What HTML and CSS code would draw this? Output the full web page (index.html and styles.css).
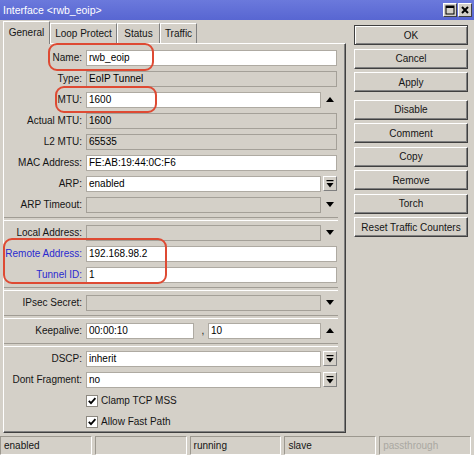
FILE: index.html
```html
<!DOCTYPE html>
<html>
<head>
<meta charset="utf-8">
<link rel="stylesheet" href="styles.css">
</head>
<body>
<div class="window">
  <div class="titlebar">
    <span class="title">Interface &lt;rwb_eoip&gt;</span>
    <div class="wbtns">
      <div class="wbtn"><svg width="10" height="10" viewBox="0 0 10 10"><rect x="1" y="1" width="8" height="8" fill="none" stroke="#000" stroke-width="1"/><rect x="1" y="1" width="8" height="2" fill="#000"/></svg></div>
      <div class="wbtn"><svg width="10" height="10" viewBox="0 0 10 10"><path d="M2 2 L8 8 M8 2 L2 8" stroke="#000" stroke-width="2"/></svg></div>
    </div>
  </div>
  <div class="main">
    <div class="left">
      <div class="tabs">
        <div class="tab active t1">General</div>
        <div class="tab t2">Loop Protect</div>
        <div class="tab t3">Status</div>
        <div class="tab t4">Traffic</div>
      </div>
      <div class="panel">
        <div class="row"><span class="lbl">Name:</span><div class="field">rwb_eoip</div></div>
        <div class="row"><span class="lbl">Type:</span><div class="field ro">EoIP Tunnel</div></div>
        <div class="row"><span class="lbl">MTU:</span><div class="field short">1600</div><span class="slot"><svg class="tri" width="8" height="5" viewBox="0 0 8 5"><polygon points="0,5 8,5 4,0" fill="#000"/></svg></span></div>
        <div class="row"><span class="lbl">Actual MTU:</span><div class="field ro">1600</div></div>
        <div class="row"><span class="lbl">L2 MTU:</span><div class="field ro">65535</div></div>
        <div class="row"><span class="lbl">MAC Address:</span><div class="field">FE:AB:19:44:0C:F6</div></div>
        <div class="row"><span class="lbl">ARP:</span><div class="field short">enabled</div><span class="slot"><span class="dd"><svg width="8" height="8" viewBox="0 0 8 8"><rect x="0.5" y="0" width="7" height="1.2" fill="#000"/><polygon points="0.5,3 7.5,3 4,7.5" fill="#000"/></svg></span></span></div>
        <div class="row"><span class="lbl">ARP Timeout:</span><div class="field short ro"></div><span class="slot"><svg class="tri" width="8" height="5" viewBox="0 0 8 5"><polygon points="0,0 8,0 4,5" fill="#000"/></svg></span></div>
        <div class="sep"></div>
        <div class="row"><span class="lbl">Local Address:</span><div class="field short ro"></div><span class="slot"><svg class="tri" width="8" height="5" viewBox="0 0 8 5"><polygon points="0,0 8,0 4,5" fill="#000"/></svg></span></div>
        <div class="row"><span class="lbl blue">Remote Address:</span><div class="field">192.168.98.2</div></div>
        <div class="row"><span class="lbl blue">Tunnel ID:</span><div class="field">1</div></div>
        <div class="sep"></div>
        <div class="row"><span class="lbl">IPsec Secret:</span><div class="field short ro"></div><span class="slot"><svg class="tri" width="8" height="5" viewBox="0 0 8 5"><polygon points="0,0 8,0 4,5" fill="#000"/></svg></span></div>
        <div class="sep"></div>
        <div class="row"><span class="lbl">Keepalive:</span><div class="field ka1">00:00:10</div><span class="comma">,</span><div class="field ka2">10</div><span class="slot"><svg class="tri" width="8" height="5" viewBox="0 0 8 5"><polygon points="0,5 8,5 4,0" fill="#000"/></svg></span></div>
        <div class="sep sep4"></div>
        <div class="row"><span class="lbl">DSCP:</span><div class="field short">inherit</div><span class="slot"><span class="dd"><svg width="8" height="8" viewBox="0 0 8 8"><rect x="0.5" y="0" width="7" height="1.2" fill="#000"/><polygon points="0.5,3 7.5,3 4,7.5" fill="#000"/></svg></span></span></div>
        <div class="row"><span class="lbl">Dont Fragment:</span><div class="field short">no</div><span class="slot"><span class="dd"><svg width="8" height="8" viewBox="0 0 8 8"><rect x="0.5" y="0" width="7" height="1.2" fill="#000"/><polygon points="0.5,3 7.5,3 4,7.5" fill="#000"/></svg></span></span></div>
        <div class="row"><span class="lbl"></span><span class="cb"><svg width="10" height="10" viewBox="0 0 10 10"><path d="M1.8 4.8 L4 7.2 L8.4 2.2" fill="none" stroke="#000" stroke-width="1.8"/></svg></span><span class="cbl">Clamp TCP MSS</span></div>
        <div class="row"><span class="lbl"></span><span class="cb"><svg width="10" height="10" viewBox="0 0 10 10"><path d="M1.8 4.8 L4 7.2 L8.4 2.2" fill="none" stroke="#000" stroke-width="1.8"/></svg></span><span class="cbl">Allow Fast Path</span></div>
      </div>
    </div>
    <div class="right">
      <div class="btn default">OK</div>
      <div class="btn">Cancel</div>
      <div class="btn">Apply</div>
      <div class="btn gap">Disable</div>
      <div class="btn">Comment</div>
      <div class="btn">Copy</div>
      <div class="btn">Remove</div>
      <div class="btn">Torch</div>
      <div class="btn">Reset Traffic Counters</div>
    </div>
  </div>
  <div class="statusbar">
    <div class="cell">enabled</div>
    <div class="cell"></div>
    <div class="cell">running</div>
    <div class="cell">slave</div>
    <div class="cell dim">passthrough</div>
  </div>
  <div class="mark m-name"></div>
  <div class="mark m-mtu"></div>
  <div class="mark m-remote"></div>
</div>
</body>
</html>
```

FILE: styles.css
```css
* { box-sizing: border-box; }
html, body { margin: 0; padding: 0; }
body {
  width: 474px;
  height: 455px;
  overflow: hidden;
  background: #d4d0c8;
  font-family: "Liberation Sans", Arial, sans-serif;
  font-size: 10px;
  color: #151515;
}
.window {
  position: relative;
  width: 474px;
  height: 455px;
  display: flex;
  flex-direction: column;
}
.titlebar {
  height: 20px;
  flex: none;
  background: linear-gradient(#6b79dc, #5866d2);
  color: #fff;
  display: flex;
  align-items: center;
  padding-left: 3px;
}
.title { flex: 1; font-size: 10.5px; }
.wbtns { display: flex; gap: 1px; margin-right: 2px; }
.wbtn {
  width: 14px;
  height: 14px;
  background: #d4d0c8;
  border: 1px solid;
  border-color: #fff #404040 #404040 #fff;
  display: flex;
  align-items: center;
  justify-content: center;
}
.main { display: flex; flex: none; height: 414px; }
.left { width: 346px; padding-left: 3px; display: flex; flex-direction: column; }
.tabs { height: 23px; display: flex; align-items: flex-end; flex: none; }
.tab {
  height: 20px;
  border: 1px solid;
  border-color: #fff #808080 transparent #fff;
  border-bottom: none;
  display: flex;
  align-items: center;
  justify-content: center;
  background: #d4d0c8;
}
.tab.active {
  height: 23px;
  margin-bottom: -1px;
  position: relative;
  z-index: 1;
  padding-bottom: 2px;
}
.t1 { width: 47px; }
.t2 { width: 67px; }
.t3 { width: 43px; }
.t4 { width: 37px; }
.panel {
  height: 390px;
  border: 1px solid;
  border-color: #fff #404040 #404040 #fff;
  box-shadow: inset -1px -1px 0 #808080;
  padding-top: 3px;
}
.row { height: 21px; display: flex; align-items: center; }
.lbl {
  width: 78px;
  margin-right: 4px;
  text-align: right;
  white-space: nowrap;
}
.lbl.blue { color: #2a2ad0; }
.field {
  width: 251px;
  height: 16px;
  border: 1px solid #aeaaa2;
  background: #fff;
  padding-left: 2px;
  line-height: 14px;
  white-space: nowrap;
  color: #000;
}
.field.short { width: 235px; }
.field.ro { background: #d4d0c8; border-color: #a4a098; }
.field.ka1 { width: 108px; }
.field.ka2 { width: 113px; }
.comma { width: 14px; text-align: center; padding-left: 4px; line-height: 16px; }
.slot { width: 16px; height: 16px; display: flex; align-items: center; justify-content: center; }
.tri { margin-left: 2px; }
.dd {
  width: 14px;
  height: 15px;
  margin-left: 2px;
  border: 1px solid;
  border-color: #fff #808080 #808080 #fff;
  display: flex;
  align-items: center;
  justify-content: center;
}
.sep {
  height: 7px;
  margin-right: 7px;
  display: flex;
  align-items: center;
}
.sep::before {
  content: "";
  display: block;
  width: 100%;
  height: 2px;
  border-top: 1px solid #a09c94;
  border-bottom: 1px solid #fff;
}
.cb {
  width: 12px;
  height: 12px;
  background: #fff;
  border: 1px solid #8c8880;
  display: flex;
  align-items: center;
  justify-content: center;
}
.cbl { margin-left: 3px; }
.right {
  width: 114px;
  margin-left: 8px;
  padding-top: 5px;
  display: flex;
  flex-direction: column;
  gap: 3.5px;
}
.btn {
  height: 20px;
  border: 1px solid;
  border-color: #fff #404040 #404040 #fff;
  box-shadow: inset -1px -1px 0 #808080;
  display: flex;
  align-items: center;
  justify-content: center;
  white-space: nowrap;
}
.btn.default { border-color: #404040; box-shadow: inset 1px 1px 0 #fff, inset -1px -1px 0 #808080; }
.btn.gap { margin-top: 4px; }
.statusbar {
  margin-top: auto;
  height: 19px;
  display: grid;
  grid-template-columns: repeat(5, 1fr);
  gap: 3px;
  width: 471px;
}
.cell {
  border: 1px solid;
  border-color: #9c988f #fff #fff #9c988f;
  padding-left: 3px;
  line-height: 17px;
  white-space: nowrap;
}
.cell.dim { color: #aaa8a2; }
.mark {
  position: absolute;
  border: 2px solid #de4a33;
  border-radius: 9px;
}
.m-name { left: 48px; top: 43px; width: 106px; height: 28px; }
.m-mtu { left: 55px; top: 86px; width: 102px; height: 27px; }
.m-remote { left: 3px; top: 238px; width: 164px; height: 46px; }
```
